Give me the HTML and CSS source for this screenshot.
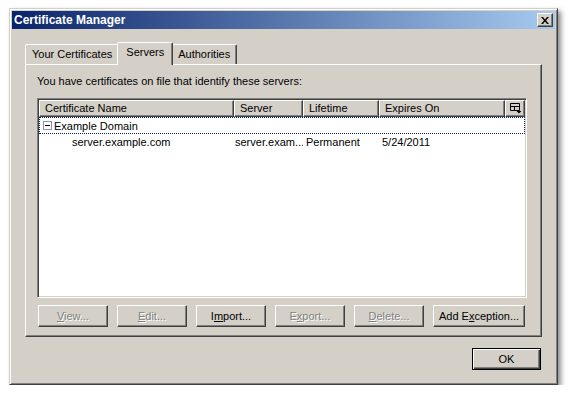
FILE: index.html
```html
<!DOCTYPE html>
<html>
<head>
<meta charset="utf-8">
<title>Certificate Manager</title>
<link rel="stylesheet" href="styles.css">
</head>
<body>
<div class="window">
  <div class="titlebar">
    <span class="title">Certificate Manager</span>
    <span class="close">
      <svg width="8" height="7" viewBox="0 0 8 7"><path d="M0 0h2l2 2.5L6 0h2L5 3.5L8 7H6L4 4.5L2 7H0l3-3.5z" fill="#000"/></svg>
    </span>
  </div>
  <div class="content">
    <div class="tabs">
      <div class="tab">Your Certificates</div>
      <div class="tab selected">Servers</div>
      <div class="tab">Authorities</div>
    </div>
    <div class="panel">
      <p class="caption">You have certificates on file that identify these servers:</p>
      <div class="tree">
        <div class="cols head">
          <div class="hcell">Certificate Name</div>
          <div class="hcell">Server</div>
          <div class="hcell">Lifetime</div>
          <div class="hcell">Expires On</div>
          <div class="hcell picker">
            <svg width="12" height="11" viewBox="0 0 12 11"><path d="M0.5 0.5h9v7h-9z M0.5 3.5h9 M4.5 3.5v4" fill="none" stroke="#000"/><path d="M6.5 8h5l-2.5 2.5z" fill="#000"/></svg>
          </div>
        </div>
        <div class="row group">
          <span class="twisty"><span class="minus"></span></span>
          <span class="gname">Example Domain</span>
        </div>
        <div class="cols row">
          <div class="cell indent">server.example.com</div>
          <div class="cell c2">server.exam...</div>
          <div class="cell c3">Permanent</div>
          <div class="cell c3">5/24/2011</div>
          <div class="cell"></div>
        </div>
      </div>
      <div class="buttons">
        <div class="btn disabled"><u>V</u>iew...</div>
        <div class="btn disabled"><u>E</u>dit...</div>
        <div class="btn">I<u>m</u>port...</div>
        <div class="btn disabled">E<u>x</u>port...</div>
        <div class="btn disabled"><u>D</u>elete...</div>
        <div class="btn wide">Add E<u>x</u>ception...</div>
      </div>
    </div>
    <div class="footer">
      <div class="btn default">OK</div>
    </div>
  </div>
</div>
</body>
</html>
```

FILE: styles.css
```css
* { box-sizing: border-box; }
html, body { margin: 0; padding: 0; background: #fff; }
body { font-family: "Liberation Sans", Arial, sans-serif; font-size: 11px; color: #000; }

.window {
  width: 549px;
  height: 377px;
  margin: 8px 0 0 9px;
  background: #d4d0c8;
  border: 1px solid;
  border-color: #d4d0c8 #404040 #404040 #d4d0c8;
  box-shadow: inset 1px 1px #fff, inset -1px -1px #808080, 3px 3px 5px rgba(0,0,0,0.45);
  padding: 2px;
  display: flex;
  flex-direction: column;
}

.titlebar {
  height: 18px;
  background: linear-gradient(to right, #0a246a, #a6caf0);
  display: flex;
  align-items: center;
  justify-content: space-between;
  padding: 0 2px 0 2px;
}
.title { color: #fff; font-weight: bold; font-size: 12px; }
.close {
  width: 16px; height: 14px;
  background: #d4d0c8;
  border: 1px solid;
  border-color: #fff #404040 #404040 #fff;
  box-shadow: inset -1px -1px #808080;
  display: flex; align-items: center; justify-content: center;
  padding-right: 1px;
}

.content {
  flex: 1;
  padding: 13px 13px 11px 13px;
  display: flex;
  flex-direction: column;
}

.tabs { height: 22px; display: flex; align-items: flex-end; }
.tab {
  height: 20px;
  padding: 0 6px;
  line-height: 18px;
  border: 1px solid;
  border-bottom: none;
  border-color: #fff #404040 transparent #fff;
  box-shadow: inset -1px 0 #808080;
  border-radius: 2px 2px 0 0;
  background: #d4d0c8;
  position: relative;
}
.tab.selected {
  height: 23px;
  margin: 0 -2px -1px;
  padding: 0 8px;
  line-height: 18px;
  z-index: 2;
}

.panel {
  height: 273px;
  border: 1px solid;
  border-color: #fff #404040 #404040 #fff;
  box-shadow: inset -1px -1px #808080;
  padding: 9px 13px 9px 11px;
  position: relative;
  z-index: 1;
}
.caption { margin: 0 0 10px; height: 14px; line-height: 14px; }

.tree {
  width: 490px;
  height: 200px;
  border: 1px solid;
  border-color: #808080 #fff #fff #808080;
  box-shadow: inset 1px 1px #404040, inset -1px -1px #d4d0c8;
  background: #fff;
  padding: 1px;
}
.cols { display: grid; grid-template-columns: 195px 69px 76px 126px 20px; }
.hcell {
  height: 17px;
  line-height: 15px;
  padding-left: 5px;
  background: #d4d0c8;
  border: 1px solid;
  border-color: #fff #404040 #404040 #fff;
  box-shadow: inset -1px -1px #808080;
  white-space: nowrap;
  overflow: hidden;
}
.hcell.picker { padding: 0 0 0 1px; display: flex; align-items: center; justify-content: center; }

.row { height: 17px; }
.group {
  display: flex;
  align-items: center;
  border: 1px dotted #0a246a;
}
.twisty { width: 14px; display: flex; justify-content: center; }
.minus {
  width: 9px; height: 9px;
  border: 1px solid #8a95b8;
  background: #fff linear-gradient(#000, #000) center / 5px 1px no-repeat;
}

.cell { line-height: 17px; white-space: nowrap; overflow: hidden; padding-left: 2px; }
.cell.indent { padding-left: 33px; }
.cell.c2 { padding-left: 1px; }
.cell.c3 { padding-left: 3px; }

.buttons { margin-top: 7px; display: flex; gap: 9px; padding-left: 1px; }
.btn {
  width: 70px;
  height: 22px;
  line-height: 20px;
  text-align: center;
  background: #d4d0c8;
  border: 1px solid;
  border-color: #fff #404040 #404040 #fff;
  box-shadow: inset -1px -1px #808080;
}
.btn.wide { width: 92px; }
.btn.disabled { color: #808080; text-shadow: 1px 1px #fff; }

.footer { margin-top: 11px; display: flex; justify-content: flex-end; padding-right: 1px; }
.btn.default {
  width: 69px;
  border: 1px solid #000;
  box-shadow: inset 1px 1px #fff, inset -1px -1px #404040, inset -2px -2px #808080;
}
```
